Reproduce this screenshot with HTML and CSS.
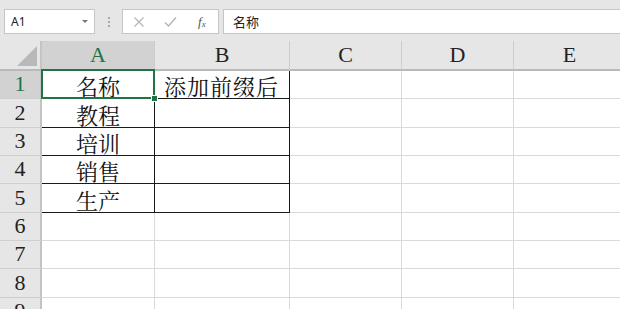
FILE: index.html
```html
<!DOCTYPE html>
<html lang="zh-CN">
<head>
<meta charset="utf-8">
<title>Sheet</title>
<link rel="stylesheet" href="styles.css">
</head>
<body>
<div class="app">
  <div class="toolbar">
    <div class="namebox"><span class="nb-text">A1</span><span class="nb-arrow"></span></div>
    <div class="grip"><i></i><i></i><i></i></div>
    <div class="fxbox">
      <svg class="ic" width="12" height="12" viewBox="0 0 12 12"><path d="M1.5 1.5 L10.5 10.5 M10.5 1.5 L1.5 10.5" stroke="#b4b4b4" stroke-width="1.2" fill="none"/></svg>
      <svg class="ic" width="13" height="12" viewBox="0 0 13 12"><path d="M1 6.5 L4.5 10 L12 1.5" stroke="#b4b4b4" stroke-width="1.4" fill="none"/></svg>
      <span class="fx"><i>f</i><sub>x</sub></span>
    </div>
    <div class="formula">名称</div>
  </div>
  <div class="sheet">
    <div class="corner"><svg width="24" height="24" viewBox="0 0 24 24"><polygon points="22,2 22,22 2,22" fill="#b9b9b9"/></svg></div>
    <div class="ch active">A</div>
    <div class="ch">B</div>
    <div class="ch">C</div>
    <div class="ch">D</div>
    <div class="ch">E</div>

    <div class="rh active">1</div>
    <div class="c ca b sel">名称<span class="handle"></span></div>
    <div class="c cb b">添加前缀后</div>
    <div class="c"></div><div class="c"></div><div class="c"></div>

    <div class="rh">2</div>
    <div class="c ca b">教程</div>
    <div class="c cb b"></div>
    <div class="c"></div><div class="c"></div><div class="c"></div>

    <div class="rh">3</div>
    <div class="c ca b">培训</div>
    <div class="c cb b"></div>
    <div class="c"></div><div class="c"></div><div class="c"></div>

    <div class="rh">4</div>
    <div class="c ca b">销售</div>
    <div class="c cb b"></div>
    <div class="c"></div><div class="c"></div><div class="c"></div>

    <div class="rh">5</div>
    <div class="c ca b">生产</div>
    <div class="c cb b"></div>
    <div class="c"></div><div class="c"></div><div class="c"></div>

    <div class="rh">6</div>
    <div class="c"></div><div class="c"></div><div class="c"></div><div class="c"></div><div class="c"></div>
    <div class="rh">7</div>
    <div class="c"></div><div class="c"></div><div class="c"></div><div class="c"></div><div class="c"></div>
    <div class="rh">8</div>
    <div class="c"></div><div class="c"></div><div class="c"></div><div class="c"></div><div class="c"></div>
    <div class="rh">9</div>
    <div class="c"></div><div class="c"></div><div class="c"></div><div class="c"></div><div class="c"></div>
  </div>
</div>
</body>
</html>
```

FILE: styles.css
```css
html, body {
  margin: 0;
  padding: 0;
}
body {
  width: 620px;
  height: 309px;
  overflow: hidden;
  background: #e6e6e6;
}
.app {
  width: 620px;
  height: 309px;
  overflow: hidden;
}
.toolbar {
  height: 41px;
  box-sizing: border-box;
  padding-top: 9px;
  display: flex;
  align-items: flex-start;
}
.namebox {
  margin-left: 4px;
  width: 91px;
  height: 25px;
  box-sizing: border-box;
  background: #fff;
  border: 1px solid #c6c6c6;
  display: flex;
  align-items: center;
  justify-content: space-between;
  padding: 0 6px 0 6px;
  font: 12px "Noto Sans", "Liberation Sans", sans-serif;
  color: #222;
}
.nb-arrow {
  width: 0;
  height: 0;
  border-left: 3px solid transparent;
  border-right: 3px solid transparent;
  border-top: 3px solid #777;
}
.grip {
  width: 27px;
  height: 25px;
  display: flex;
  flex-direction: column;
  align-items: center;
  justify-content: center;
  gap: 2px;
}
.grip i {
  width: 2px;
  height: 2px;
  background: #a8a8a8;
}
.fxbox {
  width: 97px;
  height: 25px;
  box-sizing: border-box;
  background: #fff;
  border: 1px solid #c6c6c6;
  display: flex;
  align-items: center;
  padding-left: 10px;
  gap: 19px;
}
.fx {
  font: 13px "Liberation Serif", serif;
  color: #555;
  margin-left: 2px;
}
.fx sub {
  font-size: 9px;
  font-style: italic;
  vertical-align: -1px;
}
.formula {
  margin-left: 4px;
  flex: 1;
  height: 25px;
  box-sizing: border-box;
  background: #fff;
  border: 1px solid #c6c6c6;
  border-right: none;
  padding-left: 9px;
  display: flex;
  align-items: center;
  font: 13px "Noto Sans CJK SC", "Noto Sans", sans-serif;
  color: #222;
}
.sheet {
  display: grid;
  grid-template-columns: 42px 113px 135px 112px 112px 112px;
  grid-template-rows: 30px repeat(9, 28.33px);
  background: #fff;
  width: 626px;
}
.corner {
  background: #e6e6e6;
  border-right: 2px solid #c4c4c4;
  border-bottom: 2px solid #b9b9b9;
  box-sizing: border-box;
  display: flex;
  align-items: flex-end;
  justify-content: flex-end;
  padding: 0 1px 1px 0;
}
.corner svg {
  display: block;
}
.ch {
  background: #e6e6e6;
  border-right: 1px solid #cdcdcd;
  border-bottom: 2px solid #b9b9b9;
  box-sizing: border-box;
  display: flex;
  align-items: flex-end;
  justify-content: center;
  font: 22px/1 "Liberation Serif", serif;
  color: #222;
  padding-bottom: 3px;
}
.rh {
  background: #e6e6e6;
  border-right: 2px solid #c4c4c4;
  border-bottom: 1px solid #cfcfcf;
  box-sizing: border-box;
  display: flex;
  align-items: flex-end;
  justify-content: center;
  font: 22px/1 "Liberation Serif", serif;
  color: #222;
  padding-bottom: 3px;
}
.ch.active, .rh.active {
  background: #d2d2d2;
  color: #217346;
}
.c {
  border-right: 1px solid #dadada;
  border-bottom: 1px solid #dadada;
  box-sizing: border-box;
  display: flex;
  align-items: flex-end;
  font: 22px/1 "Noto Serif CJK SC", "Noto Sans CJK SC", sans-serif;
  color: #111;
  padding-bottom: 1px;
  position: relative;
}
.c.b {
  border-right-color: #1a1a1a;
  border-bottom-color: #1a1a1a;
}
.ca {
  justify-content: center;
}
.cb {
  padding-left: 9px;
  letter-spacing: 1px;
}
.sel::after {
  content: "";
  position: absolute;
  left: -1px;
  top: -2px;
  right: -1px;
  bottom: -1px;
  border: 2px solid #217346;
}
.handle {
  position: absolute;
  right: -4px;
  bottom: -4px;
  width: 5px;
  height: 5px;
  background: #217346;
  border: 1px solid #fff;
  z-index: 2;
}
```
